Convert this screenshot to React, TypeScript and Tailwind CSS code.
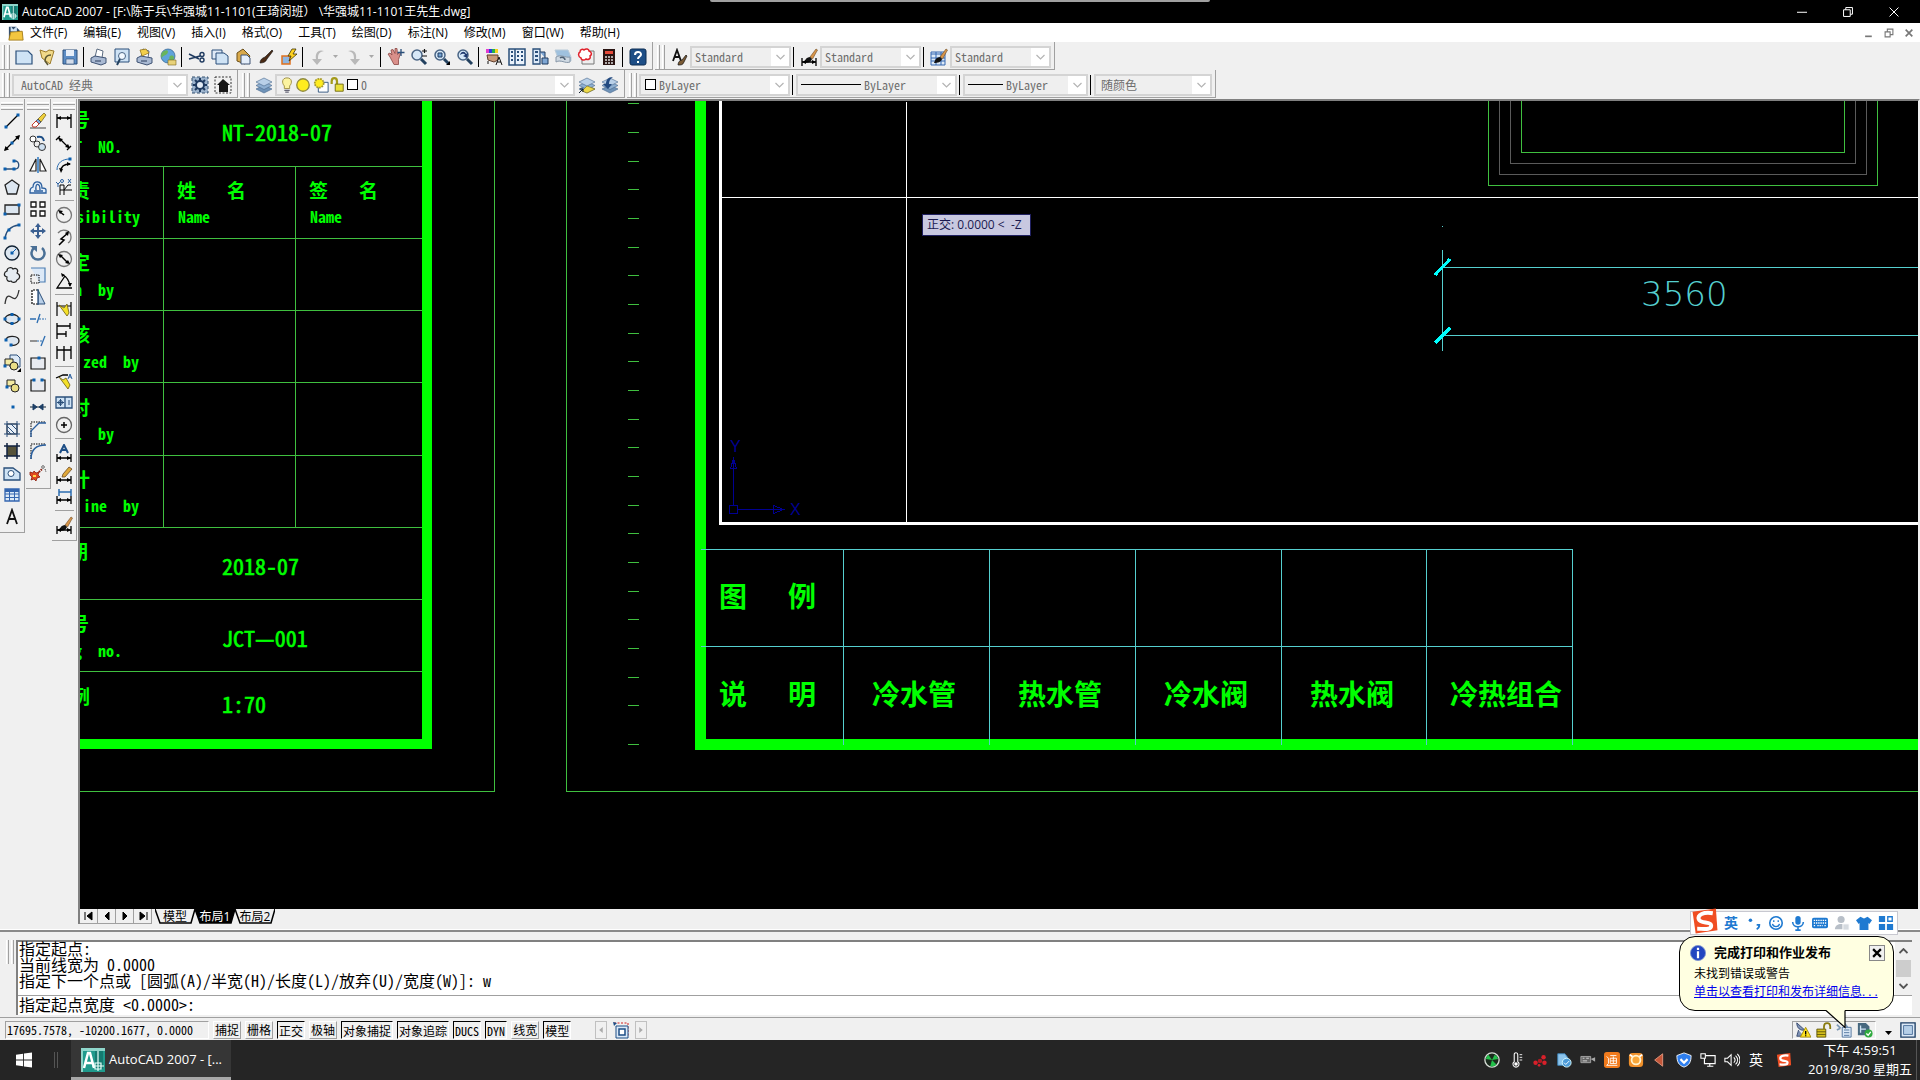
import { ReactNode } from 'react';

const UI_FONT = "font-['Open_Sans','Noto_Sans_CJK_SC',sans-serif]";
const MONO_FONT = "font-['Noto_Sans_Mono_CJK_SC','Noto_Sans_CJK_SC',monospace]";

interface IconDef {
  name: string;
  art: ReactNode;
}

type ToolItem = IconDef | 'sep';

function Icon({ children, className = 'size-[18px]' }: { children: ReactNode; className?: string }) {
  return (
    <svg viewBox="0 0 18 18" fill="none" className={className} aria-hidden="true">
      {children}
    </svg>
  );
}

const dot = (x: number, y: number) => <rect x={x - 1.5} y={y - 1.5} width="3" height="3" fill="#0b5fae" />;

const dimBar = (y: number) => (
  <g stroke="#000" strokeWidth="1.3">
    <path d={`M2 ${y}H16M2 ${y - 4}V${y + 4}M16 ${y - 4}V${y + 4}`} />
    <path d={`M2 ${y}l4-2v4zM16 ${y}l-4-2v4z`} fill="#000" stroke="none" />
  </g>
);

const brush = (
  <>
    <path d="M10 9 16 1l1.500 1-5 9z" fill="#d8954a" stroke="#6b4a23" strokeWidth=".6" />
    <path d="M4 15c1-4 3-6 6-6l2 2c-1 3-4 4-8 4z" fill="#111" />
  </>
);

const layers = (
  <>
    <path d="M1 13 9 9l8 4-8 4z" fill="#6f93b8" stroke="#46678c" strokeWidth=".6" />
    <path d="M1 9.500 9 5.500l8 4-8 4z" fill="#8fb0d2" stroke="#46678c" strokeWidth=".6" />
    <path d="M1 6 9 2l8 4-8 4z" fill="#b9d0e8" stroke="#46678c" strokeWidth=".6" />
  </>
);

const lens = (extra: ReactNode) => (
  <>
    <circle cx="7" cy="7" r="5" fill="#d6e8f8" stroke="#4a6585" strokeWidth="1.500" />
    <path d="m11 11 5 5" stroke="#23415f" strokeWidth="3" />
    {extra}
  </>
);

const printer = (
  <>
    <path d="M5 9 7 1l6 2-1 7z" fill="#fff" stroke="#5b6b80" />
    <path d="M1 10l4-2 11 2v5l-5 2-10-3z" fill="#a9b9d2" stroke="#3e5273" />
    <path d="M5 13h6" stroke="#2b3d5c" />
  </>
);

const globe = (
  <>
    <circle cx="9" cy="8" r="7" fill="#5fa3da" stroke="#2d5d8c" strokeWidth=".7" />
    <path d="M5 3c4-2 5 1 3 3s-4 1-5 4c-2-3 0-6 2-7zM11 8c3-1 4 0 4 2s-3 4-4 3-1-4 0-5z" fill="#69b45c" />
    <path d="M9 12h8v5H9z" fill="#e8d27a" stroke="#7b6420" strokeWidth=".6" />
  </>
);

const STANDARD_TOOLS: ToolItem[] = [
  { name: '新建', art: <path d="M1 3h12l4 4v9H1z" fill="#cfe3f5" stroke="#2a4f7a" strokeWidth="1.200" /> },
  {
    name: '打开',
    art: (
      <>
        <path d="M2 2l6 2 3-2 5 1-4 13-8-6z" fill="#f1d989" stroke="#9b7a28" />
        <path d="M13 7c-4 0-6 2-6 6l3 4" stroke="#5b5630" strokeWidth="1.500" />
      </>
    ),
  },
  {
    name: '保存',
    art: (
      <>
        <path d="M2 2h14v14H2z" fill="#5c8cc4" stroke="#2a4f7a" />
        <path d="M5 2h8v6H5z" fill="#e6eef8" />
        <path d="M5 11h8v5H5z" fill="#d3dcea" stroke="#2a4f7a" strokeWidth=".6" />
      </>
    ),
  },
  'sep',
  { name: '打印', art: printer },
  {
    name: '打印预览',
    art: (
      <>
        <path d="M2 1h14v13H2z" fill="#cfe3f5" stroke="#2a4f7a" />
        <circle cx="9" cy="8" r="3.500" fill="#f3f9ff" stroke="#4a6585" />
        <path d="m7 11-3 6" stroke="#23415f" strokeWidth="2" />
      </>
    ),
  },
  {
    name: '发布',
    art: (
      <>
        {printer}
        <path d="M4 2l6-1 3 4-7 3z" fill="#f2cf4b" stroke="#8a6a14" strokeWidth=".7" />
      </>
    ),
  },
  { name: '三维 DWF', art: globe },
  'sep',
  {
    name: '剪切',
    art: (
      <>
        <path d="M1 6l10 5M1 11l11-3" stroke="#1f3a5f" strokeWidth="1.500" />
        <circle cx="14" cy="6.500" r="2" stroke="#1f3a5f" strokeWidth="1.400" />
        <circle cx="14" cy="12" r="2" stroke="#1f3a5f" strokeWidth="1.400" />
      </>
    ),
  },
  {
    name: '复制',
    art: (
      <>
        <path d="M1 2h10v9H1z" fill="#dfeaf7" stroke="#2a4f7a" />
        <path d="M5 5h8l4 3v8H5z" fill="#cfe3f5" stroke="#2a4f7a" />
      </>
    ),
  },
  {
    name: '粘贴',
    art: (
      <>
        <path d="M3 5l6-4 7 7-5 8-8-3z" fill="#d9a94a" stroke="#6b4f18" />
        <path d="M7 7h6l3 3v6H7z" fill="#e4eefa" stroke="#3e5273" />
      </>
    ),
  },
  { name: '特性匹配', art: <path d="M3 15c0-3 2-5 5-6l7-7 1 1-6 8c-1 3-4 4-7 4z" fill="#4a2a14" stroke="#111" strokeWidth=".6" /> },
  {
    name: '块编辑器',
    art: (
      <>
        <path d="M2 8h8v8H2z" fill="#8fb6e0" stroke="#e0701c" strokeWidth="1.500" />
        <path d="M12 1 8 8h3l-2 5 8-7h-4l3-5z" fill="#ffd21f" stroke="#3d3206" strokeWidth=".8" />
      </>
    ),
  },
];

const VIEW_TOOLS: ToolItem[] = [
  {
    name: '实时平移',
    art: (
      <>
        <path d="M3 9 1 6l2-1 2 2-1-5 2-.500 2 4 0-5h2l.500 6 2-2 1 1-2 6v5H7z" fill="#d98f8a" stroke="#8a4844" strokeWidth=".8" />
        <path d="M14 1v7M10.500 4.500h7" stroke="#2a4f7a" strokeWidth="1.300" />
      </>
    ),
  },
  { name: '实时缩放', art: lens(<path d="M12 3h5M14.500 1v4M12 8h5" stroke="#111" strokeWidth="1.200" />) },
  {
    name: '窗口缩放',
    art: lens(
      <>
        <path d="M5 5h4v4H5z" fill="#6f9fd0" stroke="#1f3a5f" />
        <path d="M17 13v4h-4z" fill="#000" />
      </>,
    ),
  },
  { name: '缩放上一个', art: lens(<path d="M4 7c1-4 5-4 6-1l2-1-1 5-4-2 2-1c-1-2-3-1-5 0z" fill="#1f3a6f" />) },
  'sep',
  {
    name: '特性',
    art: (
      <>
        <path d="M1 1h3v4H1z" fill="#e23bd0" />
        <path d="M4 1h3v4H4z" fill="#2b3be0" />
        <path d="M7 1h3v4H7z" fill="#22b14c" />
        <path d="M10 1h3v4h-3z" fill="#f5d21f" />
        <path d="M2 7h11v5l-4 2-6-2z" fill="#c99a7a" stroke="#5e3d2a" />
        <path d="m11 17 3-8 3 8m-5-3h4M3 13v3" stroke="#111" />
      </>
    ),
  },
  {
    name: '设计中心',
    art: (
      <>
        <path d="M1 1h16v16H1zM7 1v16" fill="#eaf2fb" stroke="#2a4f7a" strokeWidth="1.500" />
        <path d="M3 4h2M3 8h2M3 12h2M9 4h2M13 4h2M9 8h2M13 8h2M9 12h2M13 12h2" stroke="#2a4f7a" strokeWidth="2" />
      </>
    ),
  },
  {
    name: '工具选项板',
    art: (
      <>
        <path d="M2 1h7v15H2z" fill="#dce9f7" stroke="#2a4f7a" strokeWidth="1.300" />
        <path d="M4 4h3M4 8h3M4 12h3" stroke="#2a4f7a" strokeWidth="2" />
        <path d="M9 4h5v6M11 10h6v6h-6z" fill="#7fa7d4" stroke="#1f3a5f" />
      </>
    ),
  },
  {
    name: '图纸集管理器',
    art: (
      <>
        <path d="M1 2h13l3 7v4H5z" fill="#9fc1de" stroke="#b9cbd9" />
        <path d="M2 9c5-3 9 1 14 0v5c-5 2-9-3-14 0z" fill="#cfd9e2" stroke="#8797a8" />
        <path d="M6 10c2-2 5 0 5 2" stroke="#4f6275" strokeWidth="1.500" />
      </>
    ),
  },
  {
    name: '标记集管理器',
    art: (
      <>
        <path d="M5 3h12v13H5z" fill="#eee" stroke="#777" />
        <path d="M3 4c0-3 3-3 4-2 2-2 5-1 5 1 3 1 3 4 1 5 1 3-2 4-4 3-2 2-5 1-5-1-3-1-3-5-1-6z" fill="#fff" stroke="#e0202a" strokeWidth="1.500" />
      </>
    ),
  },
  {
    name: '快速计算器',
    art: (
      <>
        <path d="M3 1h12v16H3z" fill="#2a1412" />
        <path d="M5 3h8v3H5z" fill="#e64a3a" />
        <path d="M5 9h8M5 12h8M5 15h8" stroke="#ddd" strokeWidth="1.500" strokeDasharray="2 1" />
      </>
    ),
  },
  'sep',
  {
    name: '帮助',
    art: (
      <>
        <rect x="1" y="1" width="16" height="16" rx="2" fill="#1d4e86" stroke="#0d2c52" />
        <path d="M6 7c0-4 6-4 6-.500 0 2-3 2-3 4.500M9 13v2" stroke="#fff" strokeWidth="2" />
      </>
    ),
  },
];

const DRAW_TOOLS: IconDef[] = [
  { name: '直线', art: <><path d="M3 15 15 3" stroke="#000" strokeWidth="1.300" />{dot(3, 15)}{dot(15, 3)}</> },
  { name: '构造线', art: <><path d="M2 16 16 2" stroke="#000" strokeWidth="1.300" /><path d="m1 17 1.500-5L6 15.500zM17 1l-5 1.500L15.500 6z" fill="#000" />{dot(9, 9)}</> },
  { name: '多段线', art: <><path d="M2 13h10c5 0 5-8 0-8" stroke="#2a4f7a" strokeWidth="1.300" />{dot(2, 13)}{dot(11, 13)}{dot(11, 5)}</> },
  { name: '正多边形', art: <path d="m9 2 7 5-2.500 9h-9L2 7z" fill="#dce6f0" stroke="#222" strokeWidth="1.300" /> },
  { name: '矩形', art: <><path d="M2 5h14v9H2z" fill="#dce6f0" stroke="#222" strokeWidth="1.300" />{dot(2, 14)}{dot(16, 5)}</> },
  { name: '圆弧', art: <><path d="M2 16C3 9 8 4 16 3" stroke="#2a4f7a" strokeWidth="1.300" />{dot(2, 16)}{dot(6, 8)}{dot(16, 3)}</> },
  { name: '圆', art: <><circle cx="9" cy="9" r="7" fill="#dce6f0" stroke="#123" strokeWidth="1.400" /><path d="m9 9 4-4" stroke="#0b5fae" />{dot(9, 9)}</> },
  { name: '修订云线', art: <path d="M4 5c0-4 5-4 6-2 3-2 6 1 4 4 4 2 3 6 0 7-1 3-5 3-6 1-3 1-5-1-4-4-4-1-3-5 0-6z" fill="#e6ecf2" stroke="#222" strokeWidth="1.200" /> },
  { name: '样条曲线', art: <path d="M2 16C3 8 5 7 8 9s6 4 8-7" stroke="#333" strokeWidth="1.300" /> },
  { name: '椭圆', art: <><ellipse cx="9" cy="9" rx="7" ry="4.500" fill="#dce6f0" stroke="#222" strokeWidth="1.300" />{dot(2, 9)}{dot(16, 9)}{dot(9, 4.5)}{dot(9, 13.5)}</> },
  { name: '椭圆弧', art: <><path d="M3 8c0-5 13-5 13 1 0 3-4 5-8 4" fill="#dce6f0" stroke="#222" strokeWidth="1.300" />{dot(3, 8)}{dot(8, 13)}</> },
  { name: '插入块', art: <><path d="M7 1h7l3 3v9H7z" fill="#dce9f7" stroke="#2a4f7a" /><path d="M2 5h8v6H2z" fill="#f3eaa2" stroke="#222" /><circle cx="11" cy="12" r="4" fill="#e9dd86" stroke="#222" />{dot(2, 12)}<path d="M18 14v4h-4z" fill="#000" /></> },
  { name: '创建块', art: <><path d="M4 4h8v6H4z" fill="#f3eaa2" stroke="#222" /><circle cx="12" cy="12" r="4" fill="#e9dd86" stroke="#222" />{dot(4, 11)}</> },
  { name: '点', art: <>{dot(10, 9)}</> },
  { name: '图案填充', art: <><path d="M4 4h10v10H4z" fill="#e7eef6" stroke="#222" /><path d="m4 6 8 8M4 10l4 4M8 4l6 6M1 4h16M1 14h16M4 1v16M14 1v16" stroke="#2a4f7a" /></> },
  { name: '渐变色', art: <><path d="M4 4h10v10H4z" fill="#55523a" /><path d="M1 4h16M1 14h16M4 1v16M14 1v16" stroke="#112240" strokeWidth="1.500" /></> },
  { name: '面域', art: <><path d="M1 4h9l7 5v7H1z" fill="#cfe3f5" stroke="#2a4f7a" strokeWidth="1.300" /><circle cx="8" cy="9.500" r="3" fill="#fff" stroke="#2a4f7a" /></> },
  { name: '表格', art: <><path d="M2 3h14v12H2z" fill="#dce9f7" stroke="#3466b0" strokeWidth="1.300" /><path d="M2 4.500h14" stroke="#3466b0" strokeWidth="3" /><path d="M2 8h14M2 11.500h14M6.500 3v12M11.500 3v12" stroke="#3466b0" /></> },
  { name: '多行文字', art: <path d="M4 16 9 2l5 14M6 11h6" stroke="#111" strokeWidth="1.800" /> },
];

const MODIFY_TOOLS: IconDef[] = [
  { name: '删除', art: <><path d="M1 16h16" stroke="#444" /><path d="M9 7l6-6 2 2-5 7z" fill="#f0d03c" stroke="#6b5a12" strokeWidth=".7" /><path d="M9 7l3 3-2 2-3-3z" fill="#7aa6d8" stroke="#333" strokeWidth=".7" /><path d="m7 9 3 3-3 3H4l-1-2z" fill="#fff" stroke="#c0392b" /></> },
  { name: '复制对象', art: <><circle cx="4" cy="5" r="3" fill="#fff" stroke="#333" /><circle cx="8" cy="10" r="3" fill="#eee" stroke="#333" /><circle cx="13" cy="13" r="3.500" fill="#cfe0f0" stroke="#333" /><path d="M8 3c4-1 6 0 7 4" stroke="#1d4e86" strokeWidth="2" /></> },
  { name: '镜像', art: <><path d="M7 3v12H1zM11 3v12h6z" fill="#fff" stroke="#222" strokeWidth="1.200" /><path d="M9 1v16" stroke="#2b78c5" strokeWidth="1.500" /></> },
  { name: '偏移', art: <path d="M1 15h16v-3c0-2-2-2-4-2 0-8-9-8-9-1-3 1-3 3-3 6zm4-2h9M7 12c-1-8 4-7 4 0" fill="#e3eefa" stroke="#2b5f9e" strokeWidth="1.300" /> },
  { name: '阵列', art: <path d="M2 2h5v5H2zM11 2h5v5h-5zM2 11h5v5H2zM11 11h5v5h-5z" fill="#fff" stroke="#111" strokeWidth="1.300" /> },
  { name: '移动', art: <path d="m9 1 3 4h-2v3h3V6l4 3-4 3v-2h-3v3h2l-3 4-3-4h2v-3H5v2L1 9l4-3v2h3V5H6z" fill="#3a5f91" /> },
  { name: '旋转', art: <><path d="M5 4a6.500 6.500 0 1 0 8 0" stroke="#4a7096" strokeWidth="2.500" /><path d="M1 2h7v6z" fill="#4a7096" /></> },
  { name: '缩放', art: <><path d="M2 2h14v14h-6" fill="#dce9f7" stroke="#4c7eb3" strokeWidth="1.200" /><path d="M2 9h8v8H2z" stroke="#000" strokeDasharray="1.500 1" /></> },
  { name: '拉伸', art: <><path d="M9 2l7 14H9z" fill="#b8cfe8" stroke="#2a4f7a" /><path d="M9 2H3v14h6" fill="#fff" stroke="#000" strokeWidth="1.200" strokeDasharray="2 1" /><path d="M9 1v16" stroke="#2a4f7a" strokeWidth="1.300" /></> },
  { name: '修剪', art: <><path d="M1 9h6M8 13l3-9" stroke="#2b6cb0" strokeWidth="1.300" /><path d="M10 9h7" stroke="#2b6cb0" strokeDasharray="2 1" /></> },
  { name: '延伸', art: <><path d="M12 14 16 4" stroke="#2b6cb0" strokeWidth="1.300" /><path d="M1 9h7" stroke="#333" /><path d="M8 9h5" stroke="#2b6cb0" strokeDasharray="2 1" /></> },
  { name: '打断于点', art: <><path d="M2 4h14v11H2z" fill="#e7eaf0" stroke="#111" strokeWidth="1.200" />{dot(10, 4)}</> },
  { name: '打断', art: <><path d="M5 4H2v11h14V4h-3" fill="#e7eaf0" stroke="#111" strokeWidth="1.200" />{dot(5, 4)}{dot(13, 4)}</> },
  { name: '合并', art: <><path d="M1 9h16" stroke="#123" /><path d="m4 6 4 3-4 3zM14 6l-4 3 4 3z" fill="#1d3f66" stroke="#1d3f66" /></> },
  { name: '倒角', art: <><path d="M2 17V2h15" stroke="#000" strokeDasharray="1.500 1" /><path d="M2 17v-6L10 3h7" stroke="#2b5f9e" strokeWidth="1.300" /></> },
  { name: '圆角', art: <><path d="M2 17V2h15" stroke="#000" strokeDasharray="1.500 1" /><path d="M2 17C2 8 7 3 17 3" stroke="#2b5f9e" strokeWidth="1.500" /></> },
  { name: '分解', art: <><path d="m1 8 3 1 1-2 2 2 3-1-1 3 2 2-3 1-1 3-2-2-3 1 1-3-2-2z" fill="#e04a20" stroke="#8a1c0c" strokeWidth=".8" /><path d="M4 12h3" stroke="#ffd84a" strokeWidth="2" /><path d="m10 8 3-3" stroke="#8a1c0c" strokeWidth="2" strokeDasharray="1.500 1" /><path d="M12 3h5M14 1v5M16 5l1 3" stroke="#444" strokeDasharray="1.500 1" /></> },
];

const DIM_TOOLS: ToolItem[] = [
  { name: '线性', art: <g stroke="#000" strokeWidth="1.300"><path d="M2 2v14M16 2v14M2 6h14" /><path d="m2 6 4-2v4zM16 6l-4-2v4z" fill="#000" stroke="none" /></g> },
  { name: '对齐', art: <g stroke="#000" strokeWidth="1.300"><path d="m4 4 10 10M1 6l4-4M12 16l4-4" /><path d="m3 4 5 1-3 3zM15 14l-5-1 3-3z" fill="#000" stroke="none" /></g> },
  { name: '弧长', art: <><path d="M2 14C2 7 7 3 15 3" stroke="#2b6cb0" /><path d="M6 15c0-5 3-7 9-7" stroke="#000" strokeWidth="1.400" />{dot(15, 3)}<path d="m4 12 2 5 2-4zM16 8l-4-2v4z" fill="#000" /></> },
  { name: '坐标', art: <><path d="M5 17V7h4v5l4-5h3M5 12h12M9 12v5" stroke="#000" /><path d="m1 4 2 2 2-2M3 6v3M13 1l3 4m0-4-3 4" stroke="#2b5f9e" /><circle cx="7" cy="3" r="1.500" stroke="#2b5f9e" /></> },
  'sep',
  { name: '半径', art: <><circle cx="9" cy="9" r="7.500" stroke="#777" strokeWidth="1.300" /><path d="m9 9-4-3" stroke="#000" strokeWidth="1.500" /><path d="m3 4 5 1-3 3z" fill="#000" /></> },
  { name: '折弯', art: <><path d="M3 5c4-5 13-3 13 4 0 3-1 5-3 6" stroke="#777" strokeWidth="1.300" /><path d="m4 17 5-5-3-1 7-6" stroke="#000" strokeWidth="1.500" /><path d="m14 3-1 5-3-3z" fill="#000" /></> },
  { name: '直径', art: <><circle cx="9" cy="9" r="7.500" stroke="#777" strokeWidth="1.300" /><path d="m5 5 8 8" stroke="#000" strokeWidth="1.500" /><path d="m3 4 5 1-3 3zM15 14l-5-1 3-3z" fill="#000" /></> },
  { name: '角度', art: <><path d="M17 16H2L10 4" stroke="#000" strokeWidth="1.300" /><path d="M8 3c4 2 6 5 7 11" stroke="#000" strokeWidth="1.200" /><path d="m6 1 4 2-3 2zM15 15l-2-4h4z" fill="#000" /></> },
  'sep',
  { name: '快速标注', art: <><path d="M2 2v14M16 2v14M2 6h14" stroke="#000" strokeWidth="1.200" /><path d="m4 5 8 11 2-3-2-9-3 4z" fill="#f4e02a" stroke="#6b5a12" strokeWidth=".8" /></> },
  { name: '基线', art: <path d="M2 1v16M15 1v6M11 9v6M2 4h13M2 12h9" stroke="#000" strokeWidth="1.300" /> },
  { name: '连续', art: <path d="M2 2v13M9 2v15M16 2v13M2 6h14" stroke="#000" strokeWidth="1.300" /> },
  'sep',
  { name: '快速引线', art: <><path d="M1 6 8 3h5" stroke="#000" strokeWidth="1.300" /><path d="m4 5 9 12 2-4-4-7-3 2z" fill="#f4e02a" stroke="#6b5a12" strokeWidth=".8" /><path d="m13 7 2-5 2 5m-3-2h2" stroke="#2b5f9e" /></> },
  { name: '公差', art: <><path d="M1 3h16v11H1zM10 3v11" fill="#cfe3f5" stroke="#2a4f7a" strokeWidth="1.300" /><circle cx="5.500" cy="8.500" r="2" stroke="#2a4f7a" /><path d="M5.500 5v7M2 8.500h7M14 6v5" stroke="#2a4f7a" /></> },
  { name: '圆心标记', art: <><circle cx="9" cy="9" r="7.500" stroke="#666" strokeWidth="1.300" /><path d="M9 6v6M6 9h6" stroke="#000" strokeWidth="1.500" /></> },
  'sep',
  { name: '编辑标注', art: <><path d="m5 9 4-8 4 8M6.500 6h5" stroke="#1d4e86" strokeWidth="2" />{dimBar(14)}</> },
  { name: '编辑标注文字', art: <>{dimBar(14)}<path d="m7 11 1-3 6-7 3 2-7 8z" fill="#e0a83a" stroke="#6b4a23" strokeWidth=".8" /></> },
  { name: '标注更新', art: <><path d="M4 1v7M16 1v7M4 4h12" stroke="#2b6cb0" strokeWidth="1.500" />{dimBar(12)}</> },
  'sep',
  { name: '标注样式', art: <>{brush}{dimBar(14)}</> },
];

const MENUS = ['文件(F)', '编辑(E)', '视图(V)', '插入(I)', '格式(O)', '工具(T)', '绘图(D)', '标注(N)', '修改(M)', '窗口(W)', '帮助(H)'];

const STATUS_TOGGLES: [string, boolean][] = [
  ['捕捉', false],
  ['栅格', false],
  ['正交', true],
  ['极轴', false],
  ['对象捕捉', true],
  ['对象追踪', true],
  ['DUCS', true],
  ['DYN', true],
  ['线宽', false],
  ['模型', true],
];

function AcadLogo({ className }: { className: string }) {
  return (
    <svg viewBox="0 0 24 24" fill="none" className={className} aria-hidden="true">
      <path d="M0 0h24v24H0z" fill="#1f9a8c" />
      <path d="M0 0h24v3H0zM0 3h2v21H0z" fill="#8fd6cb" />
      <path d="M14 3h8v18h-8z" fill="#157a70" />
      <path d="m3 20 4-15h2l4 15M5 15h7" stroke="#fff" strokeWidth="2.500" />
      <path d="M17 3v20M11 18h12M14 15h6v6h-6z" stroke="#e6fffb" strokeWidth="1.200" />
    </svg>
  );
}

function Grip() {
  return (
    <span className="mx-0.5 flex h-6 w-2 shrink-0 gap-0.5">
      <span className="w-[3px] border-r border-l border-r-[#a0a0a0] border-l-white" />
      <span className="w-[3px] border-r border-l border-r-[#a0a0a0] border-l-white" />
    </span>
  );
}

function ToolButton({ name, art }: IconDef) {
  return (
    <button type="button" aria-label={name} className="flex h-[22px] w-[23px] shrink-0 items-center justify-center">
      <Icon>{art}</Icon>
    </button>
  );
}

function Divider() {
  return <span className="mx-[2px] h-5 w-0.5 shrink-0 border-l border-black" />;
}

function Tools({ items }: { items: ToolItem[] }) {
  return <>{items.map((item, i) => (item === 'sep' ? <Divider key={i} /> : <ToolButton key={item.name} {...item} />))}</>;
}

function Toolbar({ children }: { children: ReactNode }) {
  return (
    <div className="flex h-7 items-center border-r border-b border-r-[#a0a0a0] border-b-[#a0a0a0] pt-0.5 pr-[3px]">
      <Grip />
      {children}
    </div>
  );
}

function Chevron() {
  return (
    <span className="flex w-[18px] shrink-0 items-center justify-center self-stretch bg-white">
      <svg viewBox="0 0 9 6" fill="none" className="h-1.5 w-[9px]" aria-hidden="true">
        <path d="m.5 1 4 4 4-4" stroke="#b4b4b4" strokeWidth="1.2" />
      </svg>
    </span>
  );
}

function Combo({ label, value, width, children }: { label: string; value: string; width: string; children?: ReactNode }) {
  return (
    <label className={`${width} ${MONO_FONT} flex h-[22px] shrink-0 items-center border-2 border-[#d4d4d4] bg-[#efefef] text-xs text-[#6d6d6d]`}>
      {children}
      <select aria-label={label} defaultValue={value} className="h-full min-w-0 flex-1 appearance-none bg-transparent px-[3px] leading-4 outline-none">
        <option>{value}</option>
      </select>
      <Chevron />
    </label>
  );
}

function Swatch() {
  return <span className="size-[11px] shrink-0 border border-black bg-white" />;
}

function UndoArrow({ flip }: { flip?: boolean }) {
  return (
    <>
      <button type="button" aria-label={flip ? '重做' : '放弃'} className="flex h-[22px] w-[23px] items-center justify-center">
        <Icon>
          {flip ? (
            <path d="M3 3c6-2 9 2 8 8h4l-5 6-5-6h4c0-5-1-7-6-8z" fill="#b9b9b9" />
          ) : (
            <path d="M15 3C9 1 6 5 7 11H3l5 6 5-6H9c0-5 1-7 6-8z" fill="#b9b9b9" />
          )}
        </Icon>
      </button>
      <span className="flex w-[13px] justify-center">
        <svg viewBox="0 0 5 3" className="h-[3px] w-[5px]" aria-hidden="true">
          <path d="M0 0h5L2.500 3z" fill="#a8a8a8" />
        </svg>
      </span>
    </>
  );
}

function SideToolbar({ items }: { items: ToolItem[] }) {
  return (
    <div className="flex w-[25px] flex-col items-center border-r border-b border-[#a0a0a0] pb-1">
      <span className="mt-[3px] flex h-2 w-[22px] flex-col justify-between">
        <span className="h-[3px] border-t border-b border-t-white border-b-[#a0a0a0]" />
        <span className="h-[3px] border-t border-b border-t-white border-b-[#a0a0a0]" />
      </span>
      {items.map((item, i) =>
        item === 'sep' ? <span key={i} className="my-[2px] h-0.5 w-[19px] border-t border-[#a0a0a0]" /> : <ToolButton key={item.name} {...item} />,
      )}
    </div>
  );
}

const TITLE_ROWS = [166, 238, 310, 382, 455, 527, 599, 671];
const REVISION_TICKS = [103, 132, 161, 189, 218, 247, 275, 304, 333, 361, 390, 419, 447, 476, 505, 533, 562, 591, 619, 648, 677, 705, 744];
const LEGEND_COLUMNS = [843, 989, 1135, 1281, 1426, 1572];

// [x, baseline, text]
const SMALL_LABELS: [number, number, string][] = [
  [74, 153, 'T  NO.'],
  [76, 223, 'sibility'],
  [178, 223, 'Name'],
  [310, 223, 'Name'],
  [74, 296, 'n  by'],
  [83, 368, 'zed  by'],
  [74, 440, 'l  by'],
  [83, 512, 'ine  by'],
  [74, 657, 'g  no.'],
];

const HAN_LABELS: [number, number, string][] = [
  [71, 127, '号'],
  [71, 198, '责'],
  [177, 198, '姓'],
  [227, 198, '名'],
  [309, 198, '签'],
  [359, 198, '名'],
  [71, 270, '定'],
  [71, 342, '核'],
  [71, 415, '对'],
  [71, 487, '计'],
  [69, 559, '期'],
  [70, 631, '号'],
  [71, 704, '例'],
];

const VALUE_LABELS: [number, number, string][] = [
  [222, 141, 'NT-2018-07'],
  [222, 575, '2018-07'],
  [222, 647, 'JCT—001'],
  [222, 713, '1:70'],
];

const LEGEND_LABELS: [number, number, string][] = [
  [719, 607, '图'],
  [788, 607, '例'],
  [719, 705, '说'],
  [788, 705, '明'],
  [872, 705, '冷水管'],
  [1018, 705, '热水管'],
  [1164, 705, '冷水阀'],
  [1310, 705, '热水阀'],
  [1450, 705, '冷热组合'],
];

function Labels({ rows, className }: { rows: [number, number, string][]; className: string }) {
  return (
    <g fill="#0f0" className={`${MONO_FONT} ${className}`}>
      {rows.map(([x, y, text]) => (
        <text key={`${x}-${y}`} x={x} y={y} className="whitespace-pre">
          {text}
        </text>
      ))}
    </g>
  );
}

function Drawing() {
  return (
    <svg className="block h-full w-full" fill="none" shapeRendering="crispEdges">
      <g transform="translate(-80 -101)">
        <g stroke="#3fbf3f">
          {TITLE_ROWS.map((y) => (
            <path key={y} d={`M80 ${y}.5H422`} />
          ))}
          <path d="M163.500 166V527M295.500 166V527" />
          <path d="M494.500 101V791.500H80" />
          <path d="M566.500 101V791.500H4000" />
          {REVISION_TICKS.map((y) => (
            <path key={y} d={`M628 ${y}.5H639`} />
          ))}
          <path d="M1488.500 101V185.500H1877.500V101" />
          <path d="M1521.500 101V152.500H1844.500V101" />
        </g>
        <path d="M1499.500 101V174.500H1866.500V101M1510.500 101V163.500H1855.500V101" stroke="#5a5a5a" />
        <path d="M427 101V744H80" stroke="#0f0" strokeWidth="10" />
        <path d="M700.500 101V744H4000" stroke="#0f0" strokeWidth="11" />
        <path d="M720.500 101V523.500H4000" stroke="#fff" strokeWidth="3" />
        <path d="M722 197.500H4000M906.500 102V522" stroke="#fff" />

        <g stroke="#55cfcf">
          <path d="M701 549.500H1572M701 646.500H1572" />
          {LEGEND_COLUMNS.map((x) => (
            <path key={x} d={`M${x}.5 549V745`} />
          ))}
          <path d="M1442.500 250V351M1442 267.500H4000M1442 335.500H4000M1442 226.500h1" />
        </g>
        <path d="M1435 275 1450 259M1435 343 1450 328" stroke="#0ff" strokeWidth="3" />
        <text x="1641" y="306" fill="#55cfcf" className="font-['DejaVu_Sans',sans-serif] text-[34px] font-extralight">
          3560
        </text>

        {/* UCS marker */}
        <path d="M729.500 505.500h8v8h-8zM733.500 505V459M738 509.500H783M730.500 468.500l3-10 3 10zM773.500 505.500l10 4-10 4z" stroke="#000091" />
        <g fill="#000091" className="font-['Liberation_Sans',sans-serif] text-base">
          <text x="730" y="452">Y</text>
          <text x="790" y="515">X</text>
        </g>

        <Labels rows={SMALL_LABELS} className="text-base font-bold" />
        <Labels rows={HAN_LABELS} className="text-[19px] font-bold" />
        <g stroke="#0f0" strokeWidth="0.6">
          <Labels rows={VALUE_LABELS} className="text-[22px]" />
        </g>
        <Labels rows={LEGEND_LABELS} className="text-[28px] font-bold" />
      </g>
    </svg>
  );
}

function LayoutTab({ label, active }: { label: string; active?: boolean }) {
  return (
    <button type="button" role="tab" aria-selected={!!active} className={`relative h-[15px] w-10 text-xs leading-[14px] ${active ? 'text-white' : 'text-black'}`}>
      <svg viewBox="0 0 40 15" className="absolute inset-0 h-full w-full" aria-hidden="true">
        <path d="M0 0 5 14H36L40 0" fill={active ? '#000' : '#f0f0f0'} stroke="#000" strokeWidth="1.5" />
      </svg>
      <span className="relative">{label}</span>
    </button>
  );
}

const TAB_NAV = [
  { name: '第一个', d: 'M4 3v8M11 3v8L6 7z' },
  { name: '上一个', d: 'M10 3v8L6 7z' },
  { name: '下一个', d: 'M6 3v8l4-4z' },
  { name: '最后一个', d: 'M12 3v8M5 3v8l5-4z' },
];

function LayoutTabs() {
  return (
    <div className="flex h-[15px] bg-[#f0f0f0]">
      {TAB_NAV.map(({ name, d }) => (
        <button key={name} type="button" aria-label={name} className="flex w-[18px] items-center justify-center border-r border-b border-[#a0a0a0]">
          <svg viewBox="0 0 16 14" className="h-3.5 w-4" aria-hidden="true">
            <path d={d} fill="#000" stroke="#000" />
          </svg>
        </button>
      ))}
      <div role="tablist" className={`${UI_FONT} ml-[3px] flex`}>
        <LayoutTab label="模型" />
        <LayoutTab label="布局1" active />
        <LayoutTab label="布局2" />
      </div>
    </div>
  );
}

function TitleBar() {
  return (
    <header className={`${UI_FONT} relative flex h-[23px] items-center bg-black pl-0.5 text-xs text-white`}>
      <span className="absolute top-0 left-[37%] h-0.5 w-[26%] rounded-b bg-[#a0a0a0]" />
      <AcadLogo className="size-4" />
      <h1 className="ml-1 whitespace-pre">{'AutoCAD 2007 - [F:\\陈于兵\\华强城11-1101(王琦闵班） \\华强城11-1101王先生.dwg]'}</h1>
      <div className="ml-auto flex">
        <button type="button" aria-label="最小化" className="flex w-[46px] justify-center">
          <Icon className="size-2.5"><path d="M0 9.500h18" stroke="#fff" strokeWidth="1.800" /></Icon>
        </button>
        <button type="button" aria-label="还原" className="flex w-[46px] justify-center">
          <Icon className="size-2.5"><path d="M1 5h12v12H1zM5 5V1h12v12h-4" stroke="#fff" strokeWidth="1.800" /></Icon>
        </button>
        <button type="button" aria-label="关闭" className="mr-[3px] flex w-[46px] justify-center">
          <Icon className="size-2.5"><path d="m1 1 16 16M17 1 1 17" stroke="#fff" strokeWidth="1.800" /></Icon>
        </button>
      </div>
    </header>
  );
}

function MenuBar() {
  return (
    <nav className={`${UI_FONT} flex h-[19px] items-center bg-white pl-2 text-xs`}>
      <Icon className="size-4">
        <path d="M1 2h8l4 4v10H1z" fill="#36506f" />
        <path d="M3 8l13-1 1 10H1z" fill="#f3c63f" stroke="#a37a14" />
        <path d="m3 1 3 4 4-4v6H3z" fill="#cfe3f5" />
      </Icon>
      <div className="ml-1.5 flex gap-4">
        {MENUS.map((menu) => (
          <button key={menu} type="button">
            {menu}
          </button>
        ))}
      </div>
      <div className="ml-auto flex gap-2.5 pr-1.5">
        <button type="button" aria-label="最小化文档"><Icon className="size-2.5"><path d="M2 15h12" stroke="#777" strokeWidth="3" /></Icon></button>
        <button type="button" aria-label="还原文档"><Icon className="size-2.5"><path d="M2 7h9v9H2zM6 7V2h10v10h-5" stroke="#777" strokeWidth="2" /></Icon></button>
        <button type="button" aria-label="关闭文档"><Icon className="size-2.5"><path d="m3 3 12 12M15 3 3 15" stroke="#777" strokeWidth="3" /></Icon></button>
      </div>
    </nav>
  );
}

function Toolbars() {
  return (
    <div className="flex flex-col">
      <div className="flex gap-0.5">
        <Toolbar>
          <Tools items={STANDARD_TOOLS} />
          <Divider />
          <UndoArrow />
          <UndoArrow flip />
          <Divider />
          <Tools items={VIEW_TOOLS} />
        </Toolbar>
        <Toolbar>
          <ToolButton name="文字样式" art={<><path d="M3 13 7 2l4 11M4.500 9h5" stroke="#111" strokeWidth="1.800" /><path d="M8 17c0-3 2-5 4-5l4-5 1 1-3 6c-1 3-3 3-6 3z" fill="#7a5a34" stroke="#111" strokeWidth=".7" /></>} />
          <Combo label="文字样式" value="Standard" width="w-[101px]" />
          <Divider />
          <ToolButton name="标注样式" art={<>{brush}{dimBar(14)}</>} />
          <Combo label="标注样式" value="Standard" width="w-[101px]" />
          <Divider />
          <ToolButton name="表格样式" art={<><path d="M1 4h14v13H1z" fill="#dce9f7" stroke="#3466b0" /><path d="M1 6h14M1 10h14M1 13h14M6 4v13M11 4v13" stroke="#3466b0" />{brush}</>} />
          <Combo label="表格样式" value="Standard" width="w-[101px]" />
        </Toolbar>
      </div>
      <div className="flex gap-0.5">
        <Toolbar>
          <Combo label="工作空间" value="AutoCAD 经典" width="w-[176px]"><span className="w-1 shrink-0" /></Combo>
          <ToolButton name="工作空间设置" art={<><path d="M1 1h16v16H1z" fill="#9db4cd" stroke="#35506e" strokeDasharray="3 2" /><circle cx="9" cy="9" r="4" fill="#e3ebf4" stroke="#1f3a5f" strokeWidth="2" /><path d="M9 2v3M9 13v3M2 9h3M13 9h3M4 4l2 2M12 12l2 2M14 4l-2 2M4 14l2-2" stroke="#1f3a5f" strokeWidth="2" /></>} />
          <ToolButton name="我的工作空间" art={<><path d="M1 1h16v16H1z" stroke="#333" strokeDasharray="2 1.500" /><path d="m9 3-6 6h2v7h9V9h2z" fill="#151515" /></>} />
        </Toolbar>
        <Toolbar>
          <ToolButton name="图层特性管理器" art={layers} />
          <Combo label="图层" value="0" width="w-[300px]">
            <span className="flex shrink-0 items-center pl-0.5">
              <Icon className="size-4"><path d="M9 1c-6 0-6 6-3 9v3h6v-3c3-3 3-9-3-9z" fill="#fbf3a0" stroke="#9a8a3a" /><path d="M6 15h6M7 17h4" stroke="#667" strokeWidth="1.500" /></Icon>
              <Icon className="mr-0.5 size-4"><circle cx="9" cy="9" r="7" fill="#ffec1f" stroke="#8f8a40" strokeWidth="1.500" /></Icon>
              <Icon className="size-4"><path d="M6 6h11v11H6z" fill="#fff" stroke="#2a4f7a" /><circle cx="7" cy="7" r="5" fill="#ffec1f" stroke="#a89a30" strokeWidth="2" strokeDasharray="2 1" /></Icon>
              <Icon className="mr-0.5 size-4"><path d="M3 8V5c0-5 6-5 6 0v4" stroke="#a49a1a" strokeWidth="2.500" /><path d="M7 8h9v8H7z" fill="#e9e03a" stroke="#6f680f" /></Icon>
              <Swatch />
            </span>
          </Combo>
          <ToolButton name="将对象的图层置为当前" art={<>{layers}<path d="M4 15 9 10l8 3-8 4z" fill="#ecd94b" stroke="#8a7a1c" strokeWidth=".7" /><path d="m1 17 4-4m0 3v-3H2" stroke="#123" /></>} />
          <ToolButton name="上一个图层" art={<>{layers}<path d="M12 1c-5 0-7 3-7 7H2l5 5 4-5H8c0-3 1-5 4-7z" fill="#234a80" /></>} />
        </Toolbar>
        <Toolbar>
          <Combo label="颜色控制" value="ByLayer" width="w-[151px]"><span className="flex pl-1"><Swatch /></span></Combo>
          <Divider />
          <Combo label="线型控制" value="ByLayer" width="w-[161px]"><span className="ml-[3px] w-[60px] border-t border-black" /></Combo>
          <Divider />
          <Combo label="线宽控制" value="ByLayer" width="w-[125px]"><span className="ml-[3px] w-[35px] border-t border-black" /></Combo>
          <Divider />
          <Combo label="打印样式控制" value="随颜色" width="w-[118px]"><span className="w-0.5" /></Combo>
        </Toolbar>
      </div>
    </div>
  );
}

function CommandWindow() {
  return (
    <section className="flex h-[88px] border-t-2 border-b border-t-[#8a8a8a] border-b-[#a0a0a0] pt-2 pr-2 pb-0.5 pl-1">
      <Grip />
      <div className={`${MONO_FONT} flex min-w-0 flex-1 flex-col border-t-2 border-l-2 border-[#808080] bg-white text-base leading-4`}>
        <div className="flex h-[54px] border-b border-[#a0a0a0]">
          <div className="-mt-0.5 flex-1 pl-px whitespace-pre">
            <p>指定起点:</p>
            <p>当前线宽为 0.0000</p>
            <p>指定下一个点或 [圆弧(A)/半宽(H)/长度(L)/放弃(U)/宽度(W)]: w</p>
          </div>
          <div className="flex w-[17px] flex-col items-center justify-between bg-[#f0f0f0] py-1.5">
            <svg viewBox="0 0 9 6" fill="none" className="h-1.5 w-[9px]" aria-hidden="true"><path d="m.5 5 4-4 4 4" stroke="#555" strokeWidth="1.8" /></svg>
            <span className="h-[17px] w-[15px] bg-[#cdcdcd]" />
            <svg viewBox="0 0 9 6" fill="none" className="h-1.5 w-[9px]" aria-hidden="true"><path d="m.5 1 4 4 4-4" stroke="#555" strokeWidth="1.8" /></svg>
          </div>
        </div>
        <label className="flex flex-1 items-start pl-px whitespace-pre">
          指定起点宽度 &lt;0.0000&gt;:
          <input aria-label="命令行" className="h-4 min-w-0 flex-1 outline-none" />
        </label>
      </div>
    </section>
  );
}

function StatusBar() {
  return (
    <div className={`${MONO_FONT} flex h-[22px] items-center gap-1 pt-px pr-1 pl-[5px] text-xs leading-4`}>
      <span className="flex h-[18px] w-[204px] items-center border border-t-[#a0a0a0] border-r-white border-b-white border-l-[#a0a0a0] px-px whitespace-pre">17695.7578, -10200.1677, 0.0000</span>
      {STATUS_TOGGLES.map(([label, on]) => (
        <button
          key={label}
          type="button"
          aria-pressed={on}
          className={`flex h-[18px] items-center border px-px ${on ? 'border-t-black border-r-white border-b-white border-l-black pt-0.5' : 'border-t-white border-r-[#a0a0a0] border-b-[#a0a0a0] border-l-white'}`}
        >
          {label}
        </button>
      ))}
      <button type="button" aria-label="向左" className="ml-5 flex h-[18px] w-3 items-center justify-center border border-[#c0c0c0]">
        <Icon className="size-2"><path d="M13 2v14L5 9z" fill="#aaa" /></Icon>
      </button>
      <button type="button" aria-label="最大化视口" className="flex w-5 justify-center">
        <Icon><path d="M2 2h14M16 2v14" stroke="#d02020" strokeDasharray="2 1.500" /><path d="M4 5h12v12H4z" fill="#dce9f7" stroke="#1d4e86" /><path d="M7 8h6v6H7z" fill="#fff" stroke="#1d4e86" strokeWidth="1.500" /><path d="m1 1 4 1-3 3z" fill="#1d4e86" /></Icon>
      </button>
      <button type="button" aria-label="向右" className="flex h-[18px] w-3 items-center justify-center border border-[#c0c0c0]">
        <Icon className="size-2"><path d="M5 2v14l8-7z" fill="#aaa" /></Icon>
      </button>
      <div className="ml-auto flex h-[18px] w-[84px] items-center justify-around border border-t-[#a0a0a0] border-r-white border-b-white border-l-[#a0a0a0]">
        <Icon className="size-4"><path d="M2 1c0 6 4 9 9 8zM4 9l-2 7h8" fill="#7f92b5" stroke="#33456b" /><path d="m12 6 6 11H6z" fill="#ffe21f" stroke="#a08a10" /><path d="M12 10v4M12 15v1" stroke="#000" strokeWidth="1.500" /></Icon>
        <Icon className="size-4"><path d="M1 8h10v9H1z" fill="#d8c21c" stroke="#5b5208" /><path d="M9 8V5c0-5 7-5 7 0v3" stroke="#8a7c10" strokeWidth="2" /><path d="M1 11h10M1 14h10" stroke="#5b5208" /></Icon>
        <Icon className="size-4"><path d="m1 3 4 4M1 9l4-2M9 1l4 5" stroke="#7f9ab5" strokeWidth="2" /><path d="M7 6h10v11H7z" fill="#dce9f7" stroke="#4a6f9a" /><path d="M9 9h6M9 12h6M9 15h6" stroke="#4a6f9a" /></Icon>
        <Icon className="size-4"><path d="M1 1h9l4 4v10H1z" fill="#46687f" /><path d="M4 4v8M4 8h6" stroke="#cfe3f5" strokeWidth="1.500" /><circle cx="13" cy="13" r="4.500" fill="#2faa3f" /><path d="m10.500 13 2 2 3-4" stroke="#fff" strokeWidth="1.500" /></Icon>
      </div>
      <button type="button" aria-label="状态栏菜单" className="flex w-4 items-end justify-center">
        <svg viewBox="0 0 7 4" className="mt-1.5 h-1 w-[7px]" aria-hidden="true"><path d="M0 0h7L3.500 4z" fill="#000" /></svg>
      </button>
      <button type="button" aria-label="全屏显示">
        <Icon className="size-4"><path d="M1 1h16v16H1z" fill="#dce9f7" stroke="#1d3f66" strokeWidth="1.500" /><path d="M4 4h10v10H4z" fill="#b5cfe8" stroke="#4a6f9a" /></Icon>
      </button>
    </div>
  );
}

const sogou = (
  <>
    <path d="M1 3 16 1l1 14L3 17z" fill="#f04e23" />
    <path d="M14 4C8 3 4 5 5 8s8 1 8 4-5 2-9 2" stroke="#fff" strokeWidth="2.500" />
  </>
);

const TRAY_LEFT: IconDef[] = [
  { name: '360', art: <><circle cx="9" cy="9" r="8" fill="#1b2a1e" stroke="#d5dcd5" strokeWidth="1.500" /><path d="M9 9 5 3a7 7 0 0 0-3 5zM9 9l7-1a7 7 0 0 0-4-5zM9 9l-2 7a7 7 0 0 0 7-2z" fill="#22c04a" /></> },
  { name: '温度', art: <><path d="M7 11V3c0-3 4-3 4 0v8c3 2 1 6-2 6s-5-4-2-6z" stroke="#fff" strokeWidth="1.200" /><circle cx="9" cy="13.500" r="2" fill="#fff" /><path d="M13 3h3M13 6h3M13 9h3" stroke="#fff" /></> },
  { name: '网络服务', art: <><circle cx="4" cy="12" r="2.500" fill="#d8202a" /><circle cx="9" cy="10" r="2.500" fill="#b01820" /><circle cx="13" cy="6" r="2.500" fill="#d8202a" /><circle cx="14" cy="12" r="2.500" fill="#d8202a" /><circle cx="8" cy="15" r="1.500" fill="#d8202a" /></> },
  { name: '文件同步', art: <><path d="M2 2h8l3 4v9H2z" fill="#8cc4ec" stroke="#3e86bd" /><circle cx="12" cy="12" r="5" fill="#4c9bd8" stroke="#dff" /><path d="m9 12 2 2 4-4" stroke="#fff" /></> },
  { name: '摄像头', art: <><path d="M1 5h11v7H1z" fill="#666" stroke="#aaa" /><path d="M12 8l5-2v5z" fill="#aaa" /><path d="M3 7h2M7 7h3M3 10h5" stroke="#ddd" /></> },
  { name: '通讯', art: <><rect x="0" y="0" width="18" height="18" rx="3" fill="#f07a1c" /><path d="M3 5l2 2v6l-2 2h12M7 4h7M7 7h7v6H7zM7 10h7M10.500 5v8" stroke="#fff" /></> },
  { name: '安全中心', art: <><rect x="1" y="1" width="16" height="16" rx="4" fill="#f0902a" /><circle cx="9" cy="9" r="5" fill="#f7a63a" stroke="#fff3d0" strokeWidth="2" /><path d="M2 3l3 2M16 3l-3 2" stroke="#fff" strokeWidth="2" /></> },
  { name: '音频', art: <path d="M3 9 12 2v14z" fill="#c4573a" stroke="#e59a80" /> },
];

const TRAY_RIGHT: IconDef[] = [
  { name: '电脑管家', art: <><path d="m9 1 8 3c0 7-2 11-8 13C3 15 1 11 1 4z" fill="#2e7ff0" stroke="#fff" /><path d="m5 8 4 4 4-4" stroke="#fff" strokeWidth="2.500" /></> },
  { name: '网络', art: <><path d="M5 4h12v9H5zM8 16h7M11 13v3" stroke="#fff" strokeWidth="1.300" /><path d="M1 2h5v5H1z" fill="#252525" stroke="#fff" strokeWidth="1.200" /></> },
  { name: '音量', art: <path d="M1 7h3l4-4v12l-4-4H1zM11 6c2 2 2 4 0 6M13 4c3 3 3 7 0 10M15 2c4 4 4 10 0 14" stroke="#fff" strokeWidth="1.200" /> },
];

function TrayIcon({ name, art }: IconDef) {
  return (
    <button type="button" aria-label={name} className="flex w-6 justify-center">
      <Icon className="size-4">{art}</Icon>
    </button>
  );
}

function Taskbar() {
  return (
    <footer className={`${UI_FONT} flex h-10 items-stretch bg-[#252525] text-white`}>
      <button type="button" aria-label="开始" className="flex w-12 items-center justify-center">
        <Icon className="size-4"><path d="m0 3 8-1v6.500H0zM9 1.800 18 .500v8H9zM0 9.500h8V16l-8-1zM9 9.500h9v8l-9-1.300z" fill="#fff" /></Icon>
      </button>
      <span className="mx-1.5 my-3 w-1 border-x border-[#555]" />
      <button type="button" className="ml-[7px] flex w-40 items-center gap-1 border-b-[3px] border-[#a8a8a8] bg-[#363636] pt-[3px] pl-2.5 text-[13px]">
        <AcadLogo className="size-6" />
        AutoCAD 2007 - [...
      </button>
      <div className="ml-auto flex items-center">
        {TRAY_LEFT.map((icon) => <TrayIcon key={icon.name} {...icon} />)}
        {TRAY_RIGHT.map((icon) => <TrayIcon key={icon.name} {...icon} />)}
        <button type="button" className="w-6 text-sm">英</button>
        <span className="w-1" />
        <TrayIcon name="搜狗输入法" art={sogou} />
      </div>
      <time className="ml-2 flex w-[112px] flex-col items-center justify-center text-[13px] leading-[19px] whitespace-nowrap">
        <span>下午 4:59:51</span>
        <span>2019/8/30 星期五</span>
      </time>
      <span className="w-1 border-l border-[#555]" />
    </footer>
  );
}

const IME_TOOLS: IconDef[] = [
  { name: '中英标点', art: <><circle cx="5" cy="6" r="2" fill="#1f7ad1" /><path d="M12 11h3c0 3-1 4-3 5" stroke="#1f7ad1" strokeWidth="2" /></> },
  { name: '表情', art: <><circle cx="9" cy="9" r="7" stroke="#1f7ad1" strokeWidth="1.800" /><path d="M6.500 6v2M11.500 6v2M5 10c1 4 7 4 8 0" stroke="#1f7ad1" strokeWidth="1.500" /></> },
  { name: '语音', art: <><rect x="6" y="1" width="6" height="10" rx="3" fill="#1f7ad1" /><path d="M3 8c0 7 12 7 12 0M9 13v4M6 17h6" stroke="#1f7ad1" strokeWidth="1.800" /></> },
  { name: '软键盘', art: <><rect x="0" y="3" width="18" height="12" rx="2" fill="#1f7ad1" /><path d="M2 6h14M2 9h14M2 12h2M6 12h6M14 12h2" stroke="#fff" strokeWidth="1.500" strokeDasharray="1.500 1" /></> },
  { name: '账户', art: <><circle cx="8" cy="5" r="4" fill="#b8bfc8" /><path d="M1 16c0-8 14-8 14 0z" fill="#b8bfc8" /><path d="M10 10h7v7h-7z" fill="#d5dae0" stroke="#fff" /></> },
  { name: '皮肤', art: <path d="m5 2 4 2 4-2 5 4-3 4-1-1v8H4V9l-1 1-3-4z" fill="#1f7ad1" /> },
  { name: '工具箱', art: <><path d="M1 1h7v7H1zM1 10h7v7H1zM10 10h7v7h-7z" fill="#1f7ad1" /><path d="M11 2h5v5h-5z" stroke="#1f7ad1" strokeWidth="1.500" /></> },
];

function ImeBar() {
  return (
    <div className={`${UI_FONT} absolute right-[22px] bottom-[145px] flex h-6 items-center border border-[#c8c8d0] bg-white`}>
      <Icon className="-mt-1 size-7">{sogou}</Icon>
      <button type="button" className="w-6 text-sm font-bold text-[#1f7ad1]">英</button>
      {IME_TOOLS.map(({ name, art }) => (
        <button key={name} type="button" aria-label={name} className="flex w-[22px] justify-center">
          <Icon className="size-4">{art}</Icon>
        </button>
      ))}
    </div>
  );
}

function PlotBalloon() {
  return (
    <div role="status" className={`${UI_FONT} absolute right-[26px] bottom-[69px] h-[75px] w-[215px] rounded-2xl border border-black bg-[#ffffe1] px-2.5 pt-[7px] text-xs text-black`}>
      <div className="flex h-[18px] items-center">
        <Icon className="size-4"><circle cx="9" cy="9" r="8.500" fill="#2346c0" stroke="#7f94cf" /><path d="M9 3v2.500M9 7v8" stroke="#fff" strokeWidth="2.500" /></Icon>
        <strong className="ml-2 text-[13px]">完成打印和作业发布</strong>
        <button type="button" aria-label="关闭通知" className="-mr-0.5 ml-auto flex size-4 items-center justify-center border border-[#888] bg-[#f0f0f0]">
          <Icon className="size-2.5"><path d="m2 2 14 14M16 2 2 16" stroke="#000" strokeWidth="4" /></Icon>
        </button>
      </div>
      <p className="ml-1 pt-[3px] leading-[18px]">未找到错误或警告</p>
      <a href="#plot-details" className="ml-1 block leading-[18px] whitespace-nowrap text-[#0000ee] underline">单击以查看打印和发布详细信息. . .</a>
      <svg viewBox="0 0 22 20" className="absolute top-[72px] right-[46px] h-5 w-[22px]" aria-hidden="true">
        <path d="M1 0v1.500l19 17V0z" fill="#ffffe1" />
        <path d="M1 1.500 20 18.500V1.500" fill="none" stroke="#000" strokeWidth="1.2" />
      </svg>
    </div>
  );
}

export default function App() {
  return (
    <div className="relative flex h-screen flex-col overflow-hidden bg-[#f0f0f0] text-black">
      <TitleBar />
      <MenuBar />
      <Toolbars />
      <div className="mt-px flex min-h-0 flex-1">
        <div className="flex items-start gap-px pr-px">
          <SideToolbar items={DRAW_TOOLS} />
          <SideToolbar items={MODIFY_TOOLS} />
          <SideToolbar items={DIM_TOOLS} />
        </div>
        <main className="flex min-w-0 flex-1 flex-col border-t-2 border-r-2 border-l-2 border-t-[#808080] border-r-[#f0f0f0] border-l-[#808080]">
          <div className="relative min-h-0 flex-1 overflow-hidden bg-black">
            <Drawing />
            <div className={`${UI_FONT} absolute top-[113px] left-[842px] flex h-[22px] items-center border border-[#202060] bg-[#c8c8e0] pr-2 pl-1 text-xs whitespace-pre text-[#1a1a50]`}>
              {'正交: 0.0000 <  -Z'}
            </div>
          </div>
          <LayoutTabs />
        </main>
      </div>
      <div className="h-1.5 border-b border-white" />
      <CommandWindow />
      <StatusBar />
      <Taskbar />
      <ImeBar />
      <PlotBalloon />
    </div>
  );
}
